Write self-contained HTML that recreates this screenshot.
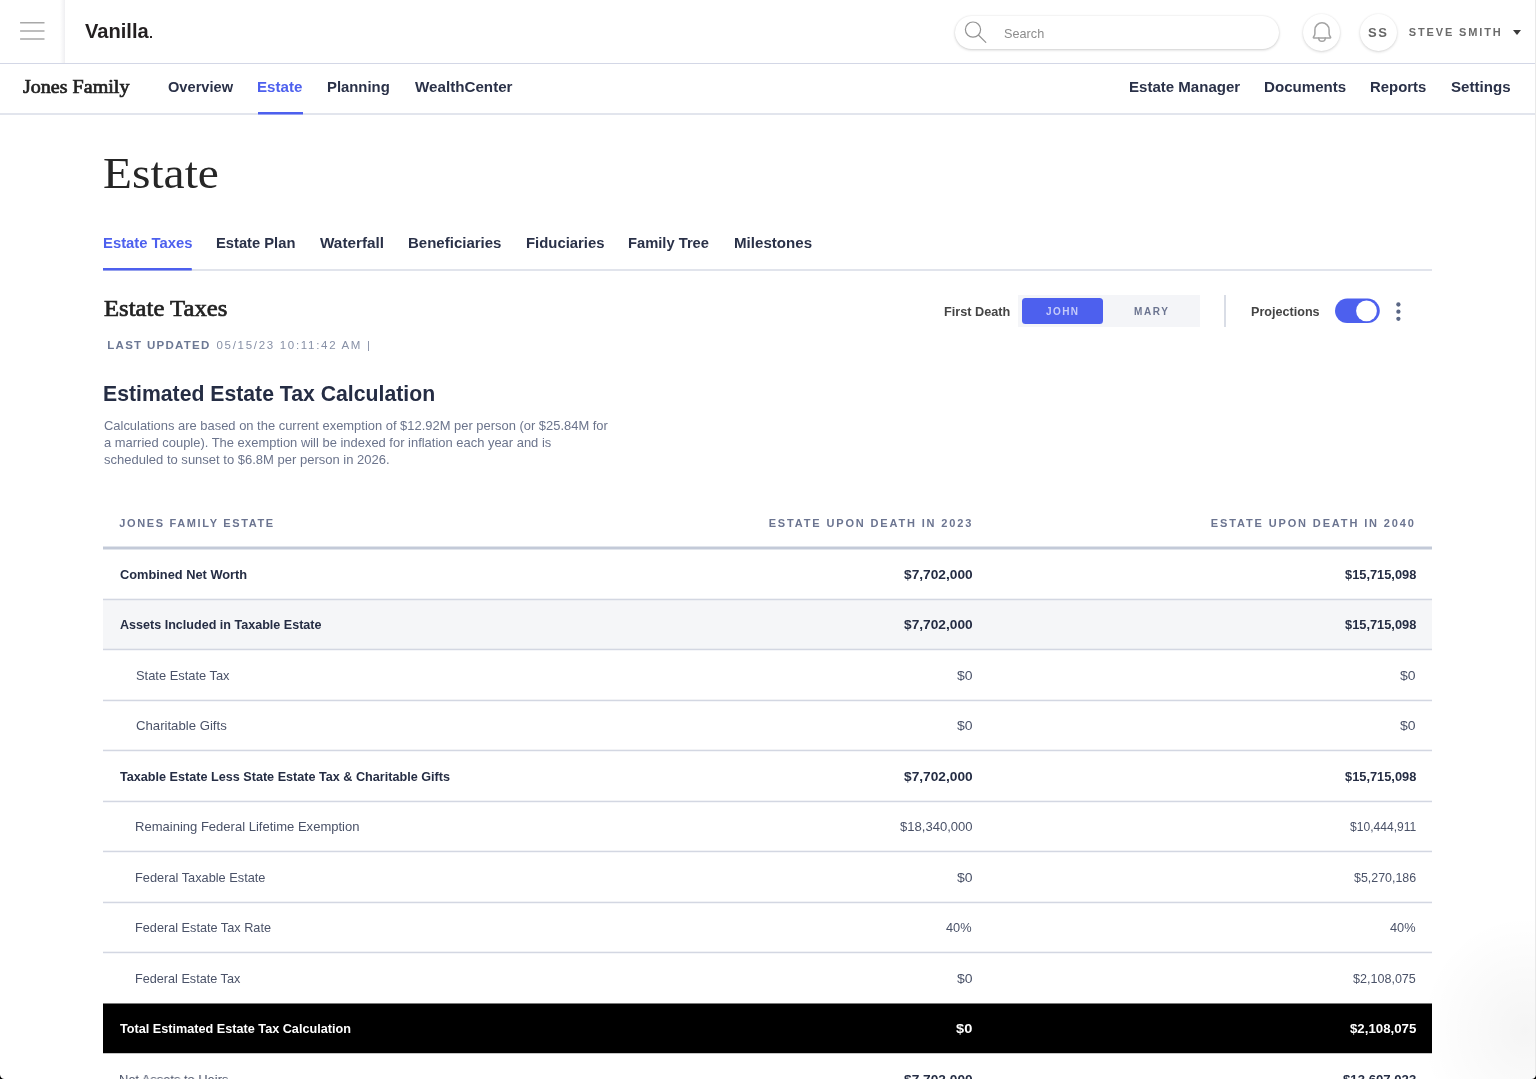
<!DOCTYPE html>
<html lang="en">
<head>
<meta charset="utf-8">
<title>Estate</title>
<style>
*{box-sizing:border-box;margin:0;padding:0}
html,body{width:1536px;height:1079px;overflow:hidden;background:#fff}
body{font-family:"Liberation Sans",sans-serif;color:#252d44;position:relative}
.t{position:absolute;white-space:pre;transform-origin:0 50%}
/* top bar */
#topbar{position:absolute;left:0;top:0;width:1536px;height:64px;background:#fff;border-bottom:1px solid #d3d7e6}
#burger div{position:absolute;left:20px;width:25px;height:2px;background:#b4b4b4}
#sidediv{position:absolute;left:60px;top:0;width:5px;height:63px;background:linear-gradient(90deg,rgba(240,240,243,0),#efeff2)}
#search{position:absolute;left:955px;top:16px;width:324px;height:33px;border-radius:17px;background:#fff;box-shadow:0 1px 3px rgba(0,0,0,.18),0 0 2px rgba(0,0,0,.08)}
.circ{position:absolute;width:36px;height:36px;border-radius:50%;background:#fff;box-shadow:0 1px 3px rgba(0,0,0,.16),0 0 2px rgba(0,0,0,.06)}
#nav2{position:absolute;left:0;top:64px;width:1536px;height:51px;border-bottom:2px solid #e2e5ed;background:#fff}
#navul{position:absolute;left:258px;top:112px;width:45px;height:2px;background:#4d60ee;box-shadow:0 1px 0 #9aa5f3}
#tabline{position:absolute;left:103px;top:269px;width:1329px;height:2px;background:#e1e4ec}
#tabul{position:absolute;left:103px;top:268px;width:88.5px;height:2px;background:#4d60ee;border-radius:0 1.5px 1.5px 0;box-shadow:0 1px 0 rgba(77,96,238,.5)}
/* controls */
#seg{position:absolute;left:1018px;top:295px;width:182px;height:32px;background:#f4f5f8}
#john{position:absolute;left:1022px;top:298px;width:81px;height:26px;background:#4d60ee;border-radius:3.5px}
#vdiv{position:absolute;left:1224px;top:295px;width:2px;height:32px;background:#d9dde6}
#sw{position:absolute;left:1335px;top:298.5px;width:45px;height:24.5px;border-radius:13px;background:#4d60ee}
#sw i{position:absolute;left:21px;top:2px;width:21px;height:21px;border-radius:50%;background:#fff}
.dot{position:absolute;left:1396.3px;width:4.4px;height:4.4px;border-radius:50%;background:#5a6785}
/* table */
#thline{position:absolute;left:103px;top:547px;width:1329px;height:2px;background:#c3cad8;box-shadow:0 -1px 0 #e1e5ec,0 1px 0 #e1e5ec}
.bg{position:absolute;left:103px;width:1329px}
.ln{position:absolute;left:103px;width:1329px;height:1px;background:#d3d7e2;box-shadow:0 -1px 0 rgba(211,215,226,.3),0 1px 0 rgba(211,215,226,.22)}
#edge{position:absolute;left:1535px;top:0;width:1px;height:1074px;background:#e9e9e9}
#glow{position:absolute;left:1380px;top:900px;width:156px;height:179px;background:radial-gradient(ellipse 105px 115px at 145px 130px,rgba(0,0,0,.04),rgba(0,0,0,.018) 50%,rgba(0,0,0,0) 100%)}
</style>
</head>
<body>
<div id="topbar"></div>
<div id="sidediv"></div>
<svg style="position:absolute;left:18px;top:18px" width="30" height="26" viewBox="18 18 30 26" stroke="#a8a8a8" stroke-width="1.5"><path d="M20.1 22.7H44.5M20.1 30.9H44.5M20.1 39.1H44.5"/></svg>
<div style="position:absolute;left:150.2px;top:36.3px;width:1.7px;height:1.7px;background:#231f20;border-radius:.3px"></div>
<div id="search"><svg style="position:absolute;left:9px;top:5px" width="24" height="24" viewBox="0 0 24 24" fill="none" stroke="#939393" stroke-width="1.2" stroke-linecap="round"><circle cx="9" cy="8.6" r="7.6"/><path d="M14.4 14l7.4 7.4"/></svg></div>
<div class="circ" style="left:1303.4px;top:13.8px;width:37px;height:37px"></div>
<svg style="position:absolute;left:1309.9px;top:20.1px" width="24" height="24" viewBox="-12 -12 24 24" fill="none" stroke="#a3a3a3" stroke-width="1.5" stroke-linejoin="round" stroke-linecap="round"><path d="M-7.1 -2.1A7.1 7.1 0 0 1 7.1 -2.1V1.5C7.1 3.2 7.9 4.2 8.6 5.2Q8.9 5.9 8.2 5.9H-8.2Q-8.9 5.9 -8.6 5.2C-7.9 4.2 -7.1 3.2 -7.1 1.5Z"/><path d="M-3.3 5.9A3.3 3.3 0 0 0 3.3 5.9"/></svg>
<div class="circ" style="left:1359.8px;top:13.8px;width:37px;height:37px"></div>
<svg style="position:absolute;left:1513px;top:30px" width="8" height="5" viewBox="0 0 8 5"><path d="M0 0h8L4 5z" fill="#3a3a3a"/></svg>
<div id="nav2"></div>
<div id="navul"></div>
<div id="tabline"></div><div id="tabul"></div>
<div id="seg"></div><div id="john"></div>
<div id="vdiv"></div>
<svg style="position:absolute;left:1330px;top:294px" width="80" height="34" viewBox="1330 294 80 34"><rect x="1335" y="298.6" width="44.8" height="24.4" rx="12.2" fill="#4d60ee"/><circle cx="1366.5" cy="310.9" r="10.4" fill="#fff"/><g fill="#5a6785"><circle cx="1398.4" cy="304.5" r="2.15"/><circle cx="1398.4" cy="311.7" r="2.15"/><circle cx="1398.4" cy="318.8" r="2.15"/></g></svg>
<div id="thline"></div>
<div class="bg" style="top:600px;height:50px;background:#f5f6f8"></div>
<div class="bg" style="top:1003px;height:1px;background:#7a7a7a"></div><div class="bg" style="top:1004px;height:49px;background:#000"></div><div class="bg" style="top:1053px;height:1px;background:#c4c4c4"></div>
<div class="ln" style="top:599px"></div>
<div class="ln" style="top:649px"></div>
<div class="ln" style="top:700px"></div>
<div class="ln" style="top:750px"></div>
<div class="ln" style="top:801px"></div>
<div class="ln" style="top:851px"></div>
<div class="ln" style="top:902px"></div>
<div class="ln" style="top:952px"></div>
<div id="glow"></div>
<div id="edge"></div>
<svg style="position:absolute;left:0;top:1073px" width="1536" height="6" viewBox="0 1073 1536 6"><path d="M0 1074.5A4.5 4.5 0 0 0 4.5 1079H0Z" fill="#000"/><path d="M1536 1074.5A4.5 4.5 0 0 1 1531.5 1079H1536Z" fill="#000"/></svg>
<div id="tx" style="position:absolute;left:0;top:0;width:1536px;height:1079px;will-change:transform">
<div class="t" style="left:85.40px;transform:scaleX(0.9572);top:17px;font:bold 21px/27px &quot;Liberation Sans&quot;,sans-serif;color:#231f20;">Vanilla</div>
<div class="t" style="left:23.30px;transform:scaleX(1.0288);top:74px;font:normal 19.5px/25px &quot;Liberation Serif&quot;,serif;color:#222;-webkit-text-stroke:.7px #222;">Jones Family</div>
<div class="t" style="left:167.50px;transform:scaleX(0.9431);top:77px;font:bold 15.5px/20px &quot;Liberation Sans&quot;,sans-serif;color:#2a3148;">Overview</div>
<div class="t" style="left:257.22px;transform:scaleX(0.9760);top:77px;font:bold 15.5px/20px &quot;Liberation Sans&quot;,sans-serif;color:#4d60ee;">Estate</div>
<div class="t" style="left:326.94px;transform:scaleX(0.9582);top:77px;font:bold 15.5px/20px &quot;Liberation Sans&quot;,sans-serif;color:#2a3148;">Planning</div>
<div class="t" style="left:414.90px;transform:scaleX(0.9790);top:77px;font:bold 15.5px/20px &quot;Liberation Sans&quot;,sans-serif;color:#2a3148;">WealthCenter</div>
<div class="t" style="left:1128.53px;transform:scaleX(0.9706);top:77px;font:bold 15.5px/20px &quot;Liberation Sans&quot;,sans-serif;color:#2a3148;">Estate Manager</div>
<div class="t" style="left:1263.93px;transform:scaleX(0.9748);top:77px;font:bold 15.5px/20px &quot;Liberation Sans&quot;,sans-serif;color:#2a3148;">Documents</div>
<div class="t" style="left:1370.44px;transform:scaleX(0.9606);top:77px;font:bold 15.5px/20px &quot;Liberation Sans&quot;,sans-serif;color:#2a3148;">Reports</div>
<div class="t" style="left:1451.30px;transform:scaleX(0.9748);top:77px;font:bold 15.5px/20px &quot;Liberation Sans&quot;,sans-serif;color:#2a3148;">Settings</div>
<div class="t" style="left:102.93px;transform:scaleX(1.0656);top:144px;font:normal 44.5px/58px &quot;Liberation Serif&quot;,serif;color:#262626;">Estate</div>
<div class="t" style="left:102.54px;transform:scaleX(0.9564);top:233px;font:bold 15.5px/20px &quot;Liberation Sans&quot;,sans-serif;color:#4d60ee;">Estate Taxes</div>
<div class="t" style="left:215.80px;transform:scaleX(0.9501);top:233px;font:bold 15.5px/20px &quot;Liberation Sans&quot;,sans-serif;color:#2a3148;">Estate Plan</div>
<div class="t" style="left:320.25px;transform:scaleX(0.9872);top:233px;font:bold 15.5px/20px &quot;Liberation Sans&quot;,sans-serif;color:#2a3148;">Waterfall</div>
<div class="t" style="left:408.23px;transform:scaleX(0.9686);top:233px;font:bold 15.5px/20px &quot;Liberation Sans&quot;,sans-serif;color:#2a3148;">Beneficiaries</div>
<div class="t" style="left:525.54px;transform:scaleX(0.9599);top:233px;font:bold 15.5px/20px &quot;Liberation Sans&quot;,sans-serif;color:#2a3148;">Fiduciaries</div>
<div class="t" style="left:628.05px;transform:scaleX(0.9495);top:233px;font:bold 15.5px/20px &quot;Liberation Sans&quot;,sans-serif;color:#2a3148;">Family Tree</div>
<div class="t" style="left:733.83px;transform:scaleX(0.9747);top:233px;font:bold 15.5px/20px &quot;Liberation Sans&quot;,sans-serif;color:#2a3148;">Milestones</div>
<div class="t" style="left:104.00px;transform:scaleX(1.0982);top:294px;font:normal 22.5px/29px &quot;Liberation Serif&quot;,serif;color:#222;-webkit-text-stroke:.65px #222;">Estate Taxes</div>
<div class="t" style="left:107.25px;letter-spacing:1.282px;top:338px;font:bold 11.5px/15px &quot;Liberation Sans&quot;,sans-serif;color:#6c7894;">LAST UPDATED</div>
<div class="t" style="left:216.50px;letter-spacing:1.698px;top:338px;font:normal 11.5px/15px &quot;Liberation Sans&quot;,sans-serif;color:#8790a6;">05/15/23 10:11:42 AM</div>
<div class="t" style="left:367.00px;letter-spacing:0.000px;top:338px;font:normal 11.5px/15px &quot;Liberation Sans&quot;,sans-serif;color:#8790a6;">|</div>
<div class="t" style="left:103.01px;transform:scaleX(0.9868);top:380px;font:bold 21.5px/28px &quot;Liberation Sans&quot;,sans-serif;color:#252d44;">Estimated Estate Tax Calculation</div>
<div class="t" style="left:103.50px;transform:scaleX(0.9946);top:417px;font:normal 13px/17px &quot;Liberation Sans&quot;,sans-serif;color:#6b748c;">Calculations are based on the current exemption of $12.92M per person (or $25.84M for</div>
<div class="t" style="left:103.50px;transform:scaleX(0.9956);top:434px;font:normal 13px/17px &quot;Liberation Sans&quot;,sans-serif;color:#6b748c;">a married couple). The exemption will be indexed for inflation each year and is</div>
<div class="t" style="left:103.50px;transform:scaleX(1.0005);top:451px;font:normal 13px/17px &quot;Liberation Sans&quot;,sans-serif;color:#6b748c;">scheduled to sunset to $6.8M per person in 2026.</div>
<div class="t" style="left:943.60px;transform:scaleX(0.9393);top:303px;font:bold 13.5px/18px &quot;Liberation Sans&quot;,sans-serif;color:#444;">First Death</div>
<div class="t" style="left:1046.30px;letter-spacing:1.597px;transform:scaleX(0.87);top:304px;font:bold 11.5px/15px &quot;Liberation Sans&quot;,sans-serif;color:#c5cbfa;">JOHN</div>
<div class="t" style="left:1134.10px;letter-spacing:1.811px;transform:scaleX(0.87);top:304px;font:bold 11.5px/15px &quot;Liberation Sans&quot;,sans-serif;color:#6b7490;">MARY</div>
<div class="t" style="left:1250.50px;transform:scaleX(0.9327);top:303px;font:bold 13.5px/18px &quot;Liberation Sans&quot;,sans-serif;color:#444;">Projections</div>
<div class="t" style="left:1003.70px;transform:scaleX(0.9393);top:25px;font:normal 13.5px/18px &quot;Liberation Sans&quot;,sans-serif;color:#8c8c8c;">Search</div>
<div class="t" style="left:1368.00px;letter-spacing:1.529px;top:24px;font:bold 13px/17px &quot;Liberation Sans&quot;,sans-serif;color:#666;">SS</div>
<div class="t" style="left:1408.80px;letter-spacing:1.860px;top:25px;font:bold 11px/14px &quot;Liberation Sans&quot;,sans-serif;color:#6b6b6b;">STEVE SMITH</div>
<div class="t" style="left:119.25px;letter-spacing:1.645px;top:516px;font:bold 11px/14px &quot;Liberation Sans&quot;,sans-serif;color:#6b7490;">JONES FAMILY ESTATE</div>
<div class="t" style="left:768.70px;letter-spacing:1.846px;top:516px;font:bold 11px/14px &quot;Liberation Sans&quot;,sans-serif;color:#6b7490;">ESTATE UPON DEATH IN 2023</div>
<div class="t" style="left:1210.80px;letter-spacing:1.867px;top:516px;font:bold 11px/14px &quot;Liberation Sans&quot;,sans-serif;color:#6b7490;">ESTATE UPON DEATH IN 2040</div>
<div class="t" style="left:119.50px;transform:scaleX(0.9858);top:566px;font:bold 13px/17px &quot;Liberation Sans&quot;,sans-serif;color:#252d44;">Combined Net Worth</div>
<div class="t" style="left:904.00px;transform:scaleX(1.0550);top:566px;font:bold 13px/17px &quot;Liberation Sans&quot;,sans-serif;color:#252d44;">$7,702,000</div>
<div class="t" style="left:1344.60px;transform:scaleX(0.9866);top:566px;font:bold 13px/17px &quot;Liberation Sans&quot;,sans-serif;color:#252d44;">$15,715,098</div>
<div class="t" style="left:119.50px;transform:scaleX(0.9661);top:616px;font:bold 13px/17px &quot;Liberation Sans&quot;,sans-serif;color:#252d44;">Assets Included in Taxable Estate</div>
<div class="t" style="left:904.00px;transform:scaleX(1.0550);top:616px;font:bold 13px/17px &quot;Liberation Sans&quot;,sans-serif;color:#252d44;">$7,702,000</div>
<div class="t" style="left:1344.60px;transform:scaleX(0.9866);top:616px;font:bold 13px/17px &quot;Liberation Sans&quot;,sans-serif;color:#252d44;">$15,715,098</div>
<div class="t" style="left:136.00px;transform:scaleX(0.9904);top:667px;font:normal 13px/17px &quot;Liberation Sans&quot;,sans-serif;color:#4a5268;">State Estate Tax</div>
<div class="t" style="left:957.10px;transform:scaleX(1.0752);top:667px;font:normal 13px/17px &quot;Liberation Sans&quot;,sans-serif;color:#4a5268;">$0</div>
<div class="t" style="left:1400.40px;transform:scaleX(1.0752);top:667px;font:normal 13px/17px &quot;Liberation Sans&quot;,sans-serif;color:#4a5268;">$0</div>
<div class="t" style="left:136.00px;transform:scaleX(1.0129);top:717px;font:normal 13px/17px &quot;Liberation Sans&quot;,sans-serif;color:#4a5268;">Charitable Gifts</div>
<div class="t" style="left:957.10px;transform:scaleX(1.0752);top:717px;font:normal 13px/17px &quot;Liberation Sans&quot;,sans-serif;color:#4a5268;">$0</div>
<div class="t" style="left:1400.40px;transform:scaleX(1.0752);top:717px;font:normal 13px/17px &quot;Liberation Sans&quot;,sans-serif;color:#4a5268;">$0</div>
<div class="t" style="left:119.50px;transform:scaleX(0.9711);top:768px;font:bold 13px/17px &quot;Liberation Sans&quot;,sans-serif;color:#252d44;">Taxable Estate Less State Estate Tax &amp; Charitable Gifts</div>
<div class="t" style="left:904.00px;transform:scaleX(1.0550);top:768px;font:bold 13px/17px &quot;Liberation Sans&quot;,sans-serif;color:#252d44;">$7,702,000</div>
<div class="t" style="left:1344.60px;transform:scaleX(0.9866);top:768px;font:bold 13px/17px &quot;Liberation Sans&quot;,sans-serif;color:#252d44;">$15,715,098</div>
<div class="t" style="left:135.00px;transform:scaleX(1.0022);top:818px;font:normal 13px/17px &quot;Liberation Sans&quot;,sans-serif;color:#4a5268;">Remaining Federal Lifetime Exemption</div>
<div class="t" style="left:900.00px;transform:scaleX(1.0047);top:818px;font:normal 13px/17px &quot;Liberation Sans&quot;,sans-serif;color:#4a5268;">$18,340,000</div>
<div class="t" style="left:1349.60px;transform:scaleX(0.9297);top:818px;font:normal 13px/17px &quot;Liberation Sans&quot;,sans-serif;color:#4a5268;">$10,444,911</div>
<div class="t" style="left:135.02px;transform:scaleX(0.9830);top:869px;font:normal 13px/17px &quot;Liberation Sans&quot;,sans-serif;color:#4a5268;">Federal Taxable Estate</div>
<div class="t" style="left:957.10px;transform:scaleX(1.0752);top:869px;font:normal 13px/17px &quot;Liberation Sans&quot;,sans-serif;color:#4a5268;">$0</div>
<div class="t" style="left:1353.80px;transform:scaleX(0.9548);top:869px;font:normal 13px/17px &quot;Liberation Sans&quot;,sans-serif;color:#4a5268;">$5,270,186</div>
<div class="t" style="left:135.02px;transform:scaleX(0.9766);top:919px;font:normal 13px/17px &quot;Liberation Sans&quot;,sans-serif;color:#4a5268;">Federal Estate Tax Rate</div>
<div class="t" style="left:946.40px;transform:scaleX(0.9826);top:919px;font:normal 13px/17px &quot;Liberation Sans&quot;,sans-serif;color:#4a5268;">40%</div>
<div class="t" style="left:1389.70px;transform:scaleX(0.9826);top:919px;font:normal 13px/17px &quot;Liberation Sans&quot;,sans-serif;color:#4a5268;">40%</div>
<div class="t" style="left:135.03px;transform:scaleX(0.9732);top:970px;font:normal 13px/17px &quot;Liberation Sans&quot;,sans-serif;color:#4a5268;">Federal Estate Tax</div>
<div class="t" style="left:957.10px;transform:scaleX(1.0752);top:970px;font:normal 13px/17px &quot;Liberation Sans&quot;,sans-serif;color:#4a5268;">$0</div>
<div class="t" style="left:1353.10px;transform:scaleX(0.9656);top:970px;font:normal 13px/17px &quot;Liberation Sans&quot;,sans-serif;color:#4a5268;">$2,108,075</div>
<div class="t" style="left:119.50px;transform:scaleX(0.9737);top:1020px;font:bold 13px/17px &quot;Liberation Sans&quot;,sans-serif;color:#fff;">Total Estimated Estate Tax Calculation</div>
<div class="t" style="left:956.40px;transform:scaleX(1.1244);top:1020px;font:bold 13px/17px &quot;Liberation Sans&quot;,sans-serif;color:#fff;">$0</div>
<div class="t" style="left:1349.60px;transform:scaleX(1.0195);top:1020px;font:bold 13px/17px &quot;Liberation Sans&quot;,sans-serif;color:#fff;">$2,108,075</div>
<div class="t" style="left:118.51px;transform:scaleX(0.9887);top:1071px;font:normal 13px/17px &quot;Liberation Sans&quot;,sans-serif;color:#4a5268;">Net Assets to Heirs</div>
<div class="t" style="left:904.00px;transform:scaleX(1.0550);top:1071px;font:bold 13px/17px &quot;Liberation Sans&quot;,sans-serif;color:#252d44;">$7,702,000</div>
<div class="t" style="left:1342.70px;transform:scaleX(1.0130);top:1071px;font:bold 13px/17px &quot;Liberation Sans&quot;,sans-serif;color:#252d44;">$13,607,023</div>
</div>
</body>
</html>
